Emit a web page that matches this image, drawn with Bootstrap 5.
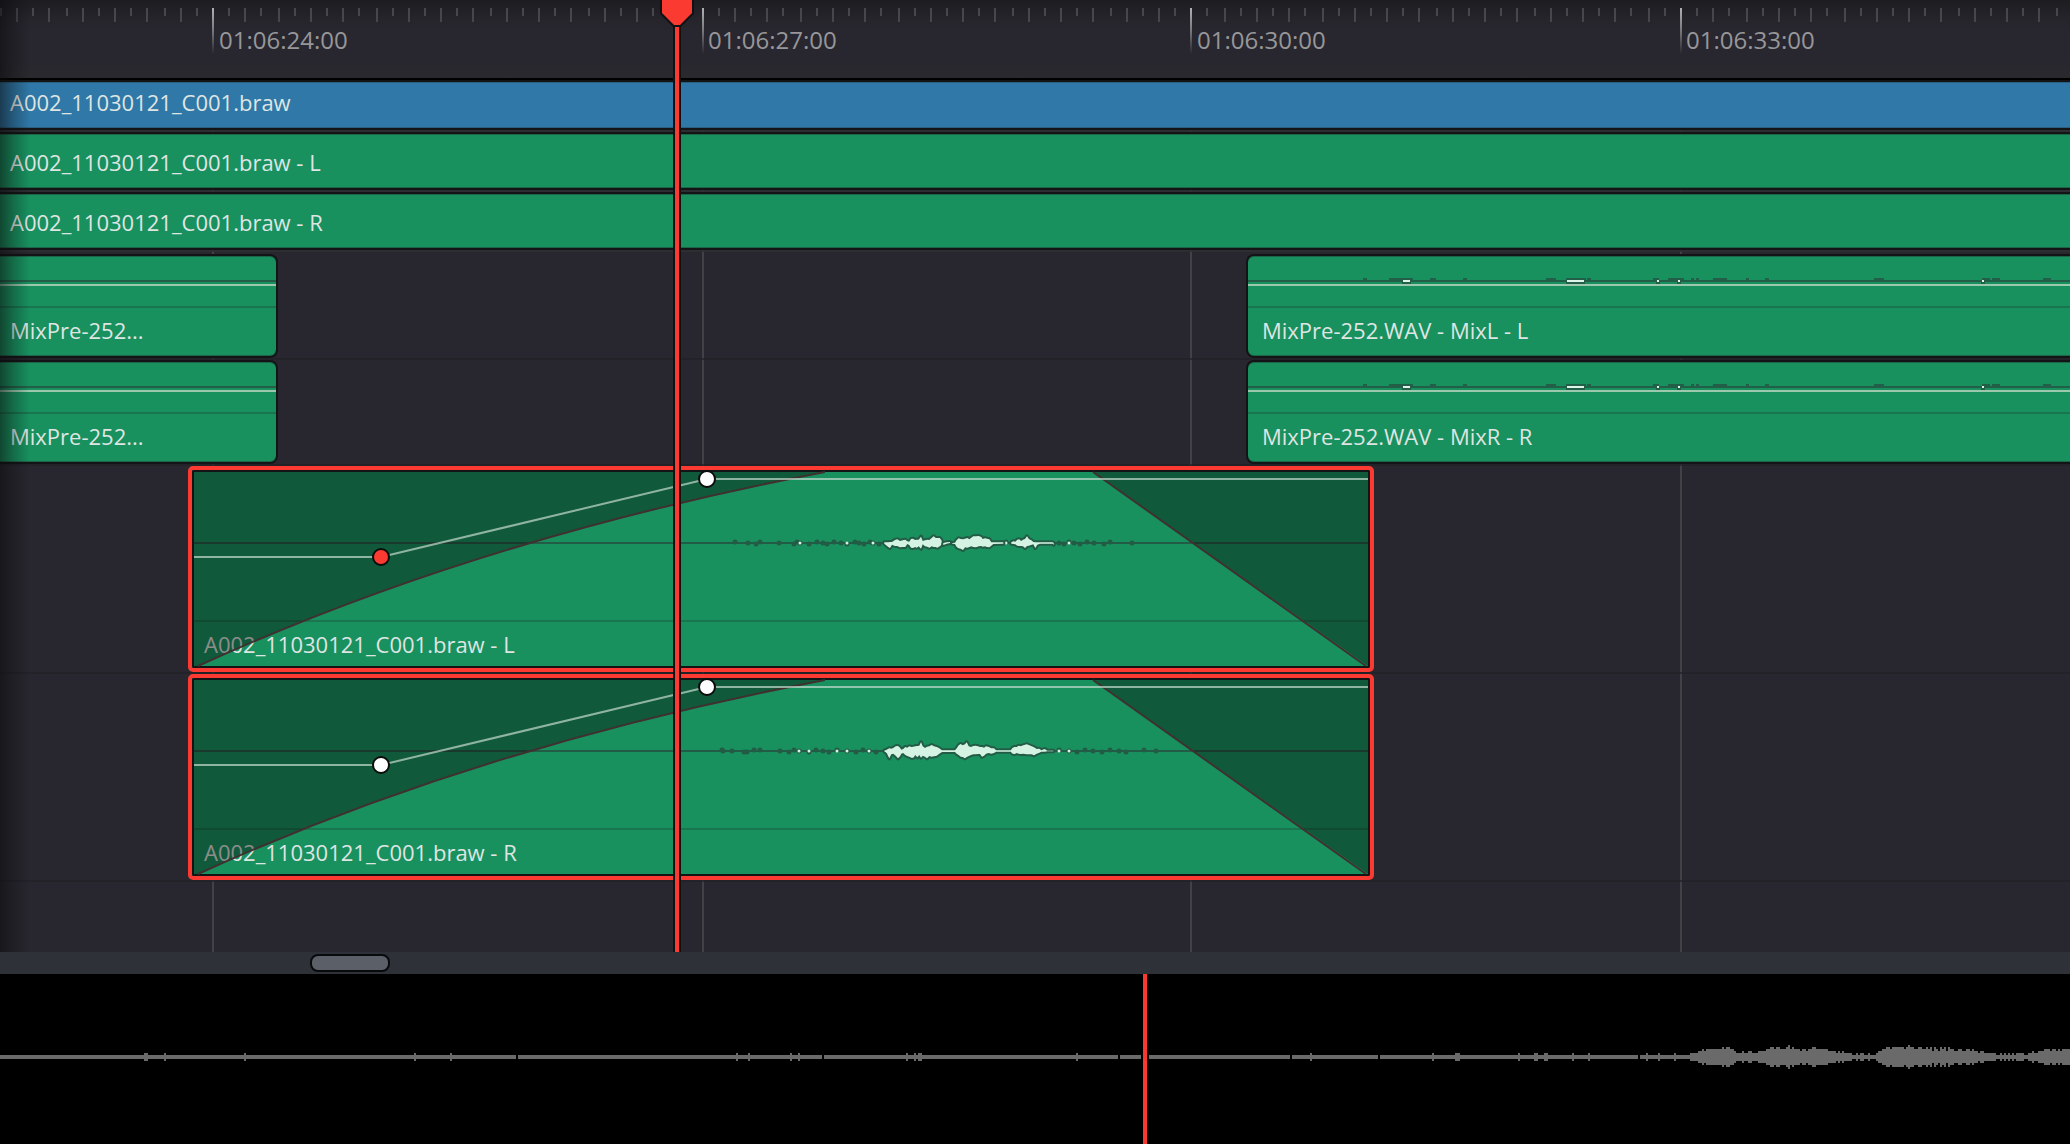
<!DOCTYPE html>
<html lang="en">
<head>
<meta charset="utf-8">
<meta name="viewport" content="width=device-width, initial-scale=1">
<title>Timeline</title>
<link href="https://cdn.jsdelivr.net/npm/bootstrap@5.3.0/dist/css/bootstrap.min.css" rel="stylesheet">
<style>
body{background:#000;color:#dfe5e2;font-family:"Open Sans","Noto Sans",sans-serif;font-size:22px;line-height:30px}
.timeline{background:#28272f}
.timeline::after{content:"";position:absolute;inset:0 auto 0 0;width:30px;background:linear-gradient(90deg,rgba(10,10,12,.55),rgba(10,10,12,.3) 40%,rgba(10,10,12,0));pointer-events:none;z-index:3}
.ruler{height:80px;border-bottom:2px solid #000;background:linear-gradient(#1d1c21,#26252c 20px,#28272f 32px,#28272f 60px,#2a292e)}
.ruler svg{inset:0}
.timecodes{padding:24px 0 0 219px;font-size:24px;line-height:32px;color:#979699}
.timecodes span{width:489px}
.lanes{background:
 linear-gradient(#434146,#434146) 212px 0/2px 100% no-repeat,
 linear-gradient(#434146,#434146) 702px 0/2px 100% no-repeat,
 linear-gradient(#434146,#434146) 1190px 0/2px 100% no-repeat,
 linear-gradient(#434146,#434146) 1680px 0/2px 100% no-repeat}
.lane{border-bottom:2px solid rgba(34,33,38,.7)}
.lane-solid{border-bottom-color:rgba(46,48,51,.85)}
.lane-last{margin-bottom:2px}
.lane-empty{height:70px}
.clip{background:#18915f;border:2px solid #131416;border-width:2px 0;height:58px;padding:0 10px 11px;white-space:nowrap;box-shadow:inset 0 1px #1d6549,inset 0 -1px #1d6549}
.clip-video{background:#2f78a7;height:50px;box-shadow:inset 0 1px #295f80,inset 0 -1px #295f80}
.clip-tall{height:104px}
.clip-tall svg{inset:0}
.clip-end{width:278px;border-right-width:2px;border-radius:0 8px 8px 0}
.clip-start{margin-left:968px;border-left-width:2px;border-radius:8px 0 0 8px;padding-left:14px}
.clip-selected{width:1186px;height:206px;margin-left:188px;border:4px solid #fb3a31;border-radius:5px;padding:0 12px 9px;box-shadow:inset 0 0 0 2px #131416}
.clip-selected svg{left:2px;top:2px}
.playhead{left:662px;top:0;width:30px;z-index:2}
.playhead-stem{width:8px;background:#fb3a31;border:solid #101113;border-width:0 2px}
.scroller{appearance:none;-webkit-appearance:none;height:22px;background:#2e3138;margin:0}
.scroller::-webkit-slider-thumb{-webkit-appearance:none;width:80px;height:18px;border:2px solid #090a0c;border-radius:8px;background:#5b5f68}
.scroller::-moz-range-thumb{box-sizing:border-box;width:80px;height:18px;border:2px solid #090a0c;border-radius:8px;background:#5b5f68}
.overview{min-height:170px;background:#000}
.overview-head{left:1143px;top:0;bottom:0;width:4px;background:#f9382f}
</style>
<script src="https://cdn.jsdelivr.net/npm/bootstrap@5.3.0/dist/js/bootstrap.bundle.min.js"></script>
</head>
<body class="d-flex flex-column min-vh-100 overflow-x-hidden">
<main class="timeline position-relative overflow-hidden">
  <header class="ruler position-relative overflow-hidden">
    <svg id="ticks" class="position-absolute w-100 h-100" shape-rendering="crispEdges" aria-hidden="true">
      <defs><linearGradient id="tickFade" x1="0" y1="0" x2="0" y2="1"><stop offset="0" stop-color="#b0b0b2"/><stop offset=".5" stop-color="#78777b"/><stop offset="1" stop-color="#28272f"/></linearGradient></defs>
    </svg>
    <div class="timecodes d-flex position-relative">
      <span class="flex-shrink-0">01:06:24:00</span><span class="flex-shrink-0">01:06:27:00</span><span class="flex-shrink-0">01:06:30:00</span><span class="flex-shrink-0">01:06:33:00</span>
    </div>
  </header>

  <div class="lanes">
    <div class="lane lane-solid d-flex"><div class="clip clip-video flex-grow-1 d-flex align-items-end">A002_11030121_C001.braw</div></div>
    <div class="lane lane-solid d-flex"><div class="clip flex-grow-1 d-flex align-items-end">A002_11030121_C001.braw - L</div></div>
    <div class="lane lane-solid lane-last d-flex"><div class="clip flex-grow-1 d-flex align-items-end">A002_11030121_C001.braw - R</div></div>

    <div class="lane d-flex">
      <div class="clip clip-tall clip-end flex-shrink-0 position-relative d-flex align-items-end overflow-hidden"><svg class="mix position-absolute w-100 h-100"></svg><span class="position-relative">MixPre-252...</span></div>
      <div class="clip clip-tall clip-start flex-grow-1 position-relative d-flex align-items-end overflow-hidden"><svg class="mix mix-wave position-absolute w-100 h-100"></svg><span class="position-relative">MixPre-252.WAV - MixL - L</span></div>
    </div>
    <div class="lane d-flex">
      <div class="clip clip-tall clip-end flex-shrink-0 position-relative d-flex align-items-end overflow-hidden"><svg class="mix position-absolute w-100 h-100"></svg><span class="position-relative">MixPre-252...</span></div>
      <div class="clip clip-tall clip-start flex-grow-1 position-relative d-flex align-items-end overflow-hidden"><svg class="mix mix-wave position-absolute w-100 h-100"></svg><span class="position-relative">MixPre-252.WAV - MixR - R</span></div>
    </div>

    <div class="lane d-flex">
      <div class="clip clip-selected flex-shrink-0 position-relative d-flex align-items-end">A002_11030121_C001.braw - L<svg class="fade-layer position-absolute overflow-visible" width="1174" height="194" data-side="L"></svg></div>
    </div>
    <div class="lane d-flex">
      <div class="clip clip-selected flex-shrink-0 position-relative d-flex align-items-end">A002_11030121_C001.braw - R<svg class="fade-layer position-absolute overflow-visible" width="1174" height="194" data-side="R"></svg></div>
    </div>
    <div class="lane-empty"></div>
  </div>

  <div class="playhead position-absolute h-100 d-flex justify-content-center">
    <div class="playhead-stem h-100"></div>
    <svg class="position-absolute top-0 overflow-visible" width="30" height="27" aria-hidden="true"><path d="M0-3V13L12 25H18L30 13V-3Z" fill="#fb3a31" stroke="#101113" stroke-width="4" stroke-linejoin="round" paint-order="stroke"/></svg>
  </div>
</main>

<input class="scroller w-100 d-block" type="range" min="0" max="1990" value="310" aria-label="Scroll timeline">

<section class="overview position-relative flex-grow-1 overflow-hidden" aria-label="Audio overview">
  <svg id="overview" class="d-block w-100" height="170" shape-rendering="crispEdges"></svg>
  <div class="overview-head position-absolute"></div>
</section>

<script>
const even = v => 2 * Math.round(v / 2);
const rect = (x, y, w, h, fill) => `<rect x="${x}" y="${y}" width="${w}" height="${h}" fill="${fill}"/>`;

// Ruler: thirty divisions between two timecodes
let ticks = '';
for (let k = -13; k < 240; k++) {
  const x = even(212 + k * 489.3 / 30);
  if (k % 30 === 0) ticks += rect(x, 8, 2, 46, 'url(#tickFade)');
  else ticks += rect(x, 8, 2, k % 2 ? 8 : 14, '#45474d');
}
document.getElementById('ticks').insertAdjacentHTML('beforeend', ticks);

// Low-level clips: axis, volume line and name line
const mixDark = [[115,4],[141,24],[182,6],[215,4],[298,10],[318,20],[339,4],[405,6],[420,16],[443,3],[448,3],[465,14],[498,3],[517,4],[626,10],[734,8],[744,8],[795,8]];
const mixLight = [[155,7],[319,17],[409,2],[430,2],[734,2]];
document.querySelectorAll('.mix').forEach(s => {
  let m = rect(0, 24, '100%', 2, '#235f48');
  if (s.classList.contains('mix-wave')) {
    mixDark.forEach(([x, w]) => m += rect(x, 22, w, 2, '#235f48'));
    mixLight.forEach(([x, w]) => m += rect(x - 1, 24, w + 2, 4, '#235f48') + rect(x, 24, w, 2, '#dcf5e8'));
  }
  m += rect(0, 28, '100%', 2, '#9cc9ae') + rect(0, 50, '100%', 2, '#187550');
  s.setAttribute('shape-rendering', 'crispEdges');
  s.innerHTML = m;
});

// Speech envelopes in thirds of a pixel: x from the start of the speech window, height above and below the axis
const speechStart = 646;
const speech = {
  L: {
    blobs: [
      [[133,2,2],[145,2,12],[150,3,15],[156,3,5],[165,9,9],[172,11,9],[180,6,13],[188,8,12],[196,10,12],[202,5,3],[208,4,6],[213,12,14],[219,13,15],[225,9,12],[230,10,14],[236,10,10],[243,19,17],[248,6,4],[255,8,10],[262,10,11],[268,9,14],[275,15,10],[281,20,12],[287,15,12],[292,15,14],[299,15,10],[304,9,6],[306,2,1]],
      [[310,0,6],[320,2,2],[330,3,0]],
      [[337,0,2],[345,1,3],[350,9,12],[356,14,16],[362,12,17],[369,11,21],[375,13,13],[382,15,14],[388,11,12],[394,16,10],[400,20,12],[408,20,13],[416,21,10],[424,18,9],[428,12,11],[435,14,10],[441,13,12],[448,11,13],[454,2,8],[460,2,3],[490,2,2]],
      [[514,2,2],[520,5,3],[526,4,4],[532,10,8],[538,11,9],[543,6,9],[549,10,10],[555,12,15],[561,20,9],[567,11,8],[573,9,6],[580,3,4],[586,2,15],[592,2,5],[600,2,2],[638,2,2],[641,0,5]]],
    dots: [541,554,562,566,585,600,603,606,615,623,629,633,640,647,653,661,665,670,676,679,685,812,865,870,875,880,886,893,900,910,916,938],
    bright: [606,653,679,812,875]
  },
  R: {
    blobs: [
      [[133,1,1],[140,4,6],[148,8,22],[154,7,10],[160,9,8],[167,14,14],[174,15,22],[180,10,16],[184,4,8],[190,6,6],[196,12,12],[202,10,15],[208,14,17],[214,12,20],[220,13,20],[226,14,12],[232,15,19],[238,16,12],[243,26,20],[248,14,14],[255,9,17],[261,13,22],[268,14,15],[275,18,17],[282,14,16],[290,12,14],[298,8,8],[306,2,3],[345,2,3],[350,8,8],[356,17,12],[362,21,17],[368,17,18],[375,20,22],[380,26,18],[386,14,15],[393,12,12],[400,15,10],[407,16,10],[414,14,9],[420,12,9],[426,12,17],[432,10,14],[438,14,8],[446,12,6],[454,8,8],[462,8,6],[468,2,2],[512,2,2],[518,10,8],[524,12,9],[530,12,6],[536,16,8],[542,14,9],[550,17,8],[560,20,10],[568,17,10],[575,14,10],[582,11,13],[590,6,8],[598,7,5],[604,2,2],[614,6,2],[622,1,1],[640,1,1]]],
    dots: [528,538,553,560,529,550,566,586,595,600,605,615,622,629,635,643,653,662,669,675,682,865,875,883,891,899,908,916,925,932,950,962],
    bright: [605,615,643,653,675,865,875]
  }
};
document.querySelectorAll('.fade-layer').forEach(s => {
  const d = speech[s.dataset.side], cy = 71;
  let m = rect(0, 70, 1174, 2, '#235c46') + rect(0, 148, 1174, 2, '#197650');
  d.dots.forEach((x, i) => m += `<circle cx="${x}" cy="${cy + i % 3 - 1}" r="2.5" fill="#235c46"/>`);
  d.bright.forEach(x => m += `<circle cx="${x}" cy="${cy}" r="1.5" fill="#d5f3e3"/>`);
  d.blobs.forEach(b => {
    const at = (x, dy) => (speechStart + x / 3).toFixed(1) + ',' + (cy + dy / 3).toFixed(1);
    const pts = b.map(p => at(p[0], -p[1])).concat(b.slice().reverse().map(p => at(p[0], p[2])));
    m += `<polygon points="${pts.join(' ')}" fill="#d5f3e3" stroke="#235c46" stroke-width="4" stroke-linejoin="round" paint-order="stroke"/>`;
  });
  const first = s.dataset.side === 'L' ? '#fb3a31' : '#fff';
  m += `<path d="M0 194V0H631Q285 66 4 194ZM899 0H1174V194Z" fill="#080202" fill-opacity=".39"/>
    <path d="M631 0Q285 66 4 194M899 0L1172 194" fill="none" stroke="#40302f" stroke-width="2"/>
    <path d="M0 85H187L513 7H1174" fill="none" stroke="#c4dccf" stroke-opacity=".7" stroke-width="2"/>
    <circle cx="187" cy="85" r="8" fill="${first}" stroke="#0b0d0c" stroke-width="2"/>
    <circle cx="513" cy="7" r="8" fill="#fff" stroke="#0b0d0c" stroke-width="2"/>`;
  s.innerHTML = m;
});

// Overview waveform: a thin line with spikes and gaps, then two-pixel speech columns
const axis = 83, grey = '#6a6a6a';
let o = rect(0, axis - 2, 1690, 4, grey);
[[144,4],[164,2],[244,2],[414,2],[450,2],[736,2],[748,2],[790,2],[798,2],[906,2],[914,2],[918,4],[1076,2],[1310,2],[1432,2],[1455,5],[1518,2],[1534,4],[1544,4],[1572,2],[1588,2],[1646,2],[1658,2],[1674,2]]
  .forEach(([x, w]) => o += rect(x, axis - 4, w, 8, grey));
[516,822,1118,1141,1147,1290,1378,1638].forEach(x => o += rect(x, axis - 2, 2, 4, '#000'));
const columns = [
  '222233', '4344444444', '5455', '443', '222322332223', '33344', '55455444', '564', '5444344344',
  '55444444', '333323232222', '1121221121112', '33445', '5455555545', '6', '55445544545',
  '354354535', '443344334434332', '33222222', '112121212122221122', '3223334443443434444'
].join('');
[...columns].forEach((c, i) => o += rect(1690 + 2 * i, axis - 2 * c, 2, 4 * c, grey));
o += rect(1690 + 2 * columns.length, axis - 6, '100%', 12, grey);
document.getElementById('overview').innerHTML = o;
</script>
</body>
</html>
